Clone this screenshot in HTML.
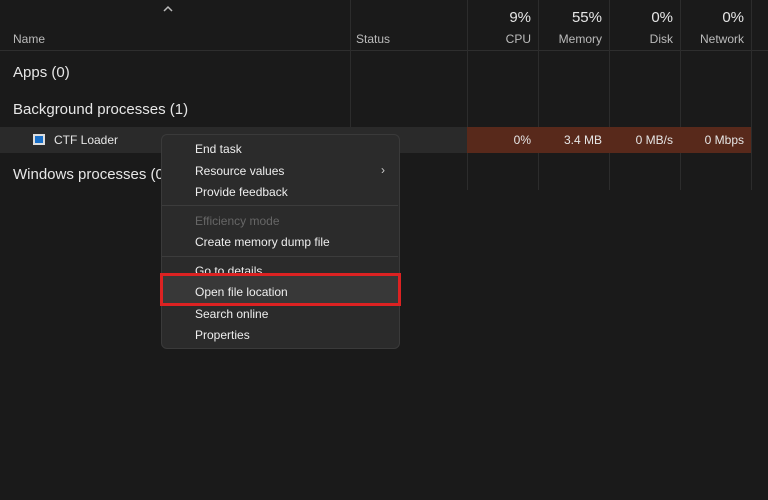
<!DOCTYPE html>
<html><head><meta charset="utf-8"><style>
body{margin:0;width:768px;height:500px;background:#1a1a1a;font-family:"Liberation Sans",sans-serif;color:#e6e6e6;position:relative;overflow:hidden}
.a{position:absolute;white-space:nowrap}
.vl{position:absolute;top:0;height:190px;width:1px;background:#2c2c2c}
.mi{position:absolute;left:195px;font-size:12px;color:#eee}
</style></head><body>
<div class="a" style="left:0;top:50px;width:768px;height:1px;background:#2e2e2e"></div>
<div class="vl" style="left:350px"></div><div class="vl" style="left:467px"></div><div class="vl" style="left:538px"></div><div class="vl" style="left:609px"></div><div class="vl" style="left:680px"></div><div class="vl" style="left:751px"></div>
<svg class="a" style="left:163px;top:5px" width="10" height="7"><path d="M1 6 L5 2 L9 6" stroke="#bbb" stroke-width="1.5" fill="none"/></svg>
<div class="a" style="left:13px;top:32px;font-size:12px;color:#bbb">Name</div>
<div class="a" style="left:356px;top:32px;font-size:12px;color:#bbb">Status</div>
<div class="a" style="right:237px;top:9px;font-size:15px">9%</div>
<div class="a" style="right:237px;top:32px;font-size:12px;color:#bbb">CPU</div>
<div class="a" style="right:166px;top:9px;font-size:15px">55%</div>
<div class="a" style="right:166px;top:32px;font-size:12px;color:#bbb">Memory</div>
<div class="a" style="right:95px;top:9px;font-size:15px">0%</div>
<div class="a" style="right:95px;top:32px;font-size:12px;color:#bbb">Disk</div>
<div class="a" style="right:24px;top:9px;font-size:15px">0%</div>
<div class="a" style="right:24px;top:32px;font-size:12px;color:#bbb">Network</div>
<div class="a" style="left:13px;top:64px;font-size:15px">Apps (0)</div>
<div class="a" style="left:13px;top:101px;font-size:15px">Background processes (1)</div>
<div class="a" style="left:0;top:127px;width:467px;height:26px;background:#2a2a2a"></div>
<div class="a" style="left:467px;top:127px;width:284px;height:26px;background:#58291b"></div>
<div class="a" style="left:33px;top:134px;width:12px;height:11px;background:#ddd"><div style="margin:2px;width:8px;height:7px;background:#1a70c8"></div></div>
<div class="a" style="left:54px;top:133px;font-size:12px">CTF Loader</div>
<div class="a" style="right:237px;top:133px;font-size:12px">0%</div>
<div class="a" style="right:166px;top:133px;font-size:12px">3.4 MB</div>
<div class="a" style="right:95px;top:133px;font-size:12px">0 MB/s</div>
<div class="a" style="right:24px;top:133px;font-size:12px">0 Mbps</div>
<div class="a" style="left:13px;top:166px;font-size:15px">Windows processes (0)</div>
<div class="a" style="left:161px;top:134px;width:237px;height:213px;background:#2b2b2b;border:1px solid #3a3a3a;border-radius:6px"></div>
<div class="mi" style="top:142px">End task</div>
<div class="mi" style="top:164px">Resource values</div>
<div class="a" style="left:381px;top:163px;font-size:12px;color:#ccc">›</div>
<div class="mi" style="top:185px">Provide feedback</div>
<div class="a" style="left:162px;top:205px;width:236px;height:1px;background:#3c3c3c"></div>
<div class="mi" style="top:214px;color:#666">Efficiency mode</div>
<div class="mi" style="top:235px">Create memory dump file</div>
<div class="a" style="left:162px;top:256px;width:236px;height:1px;background:#3c3c3c"></div>
<div class="mi" style="top:264px">Go to details</div>
<div class="a" style="left:160px;top:273px;width:235px;height:27px;background:#383838;border:3px solid #dc2222"></div>
<div class="mi" style="top:285px">Open file location</div>
<div class="mi" style="top:307px">Search online</div>
<div class="mi" style="top:328px">Properties</div>
</body></html>
